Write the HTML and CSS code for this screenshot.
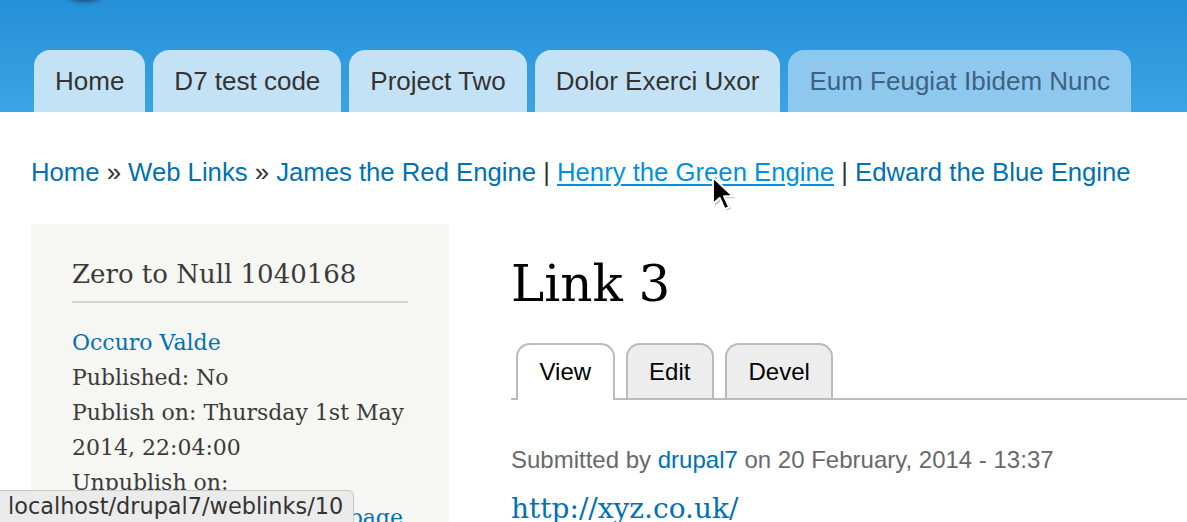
FILE: index.html
```html
<!DOCTYPE html>
<html lang="en">
<head>
  <meta charset="UTF-8">
  <title>Link 3 | drupal7</title>
  <link rel="stylesheet" href="styles.css">
</head>
<body>
<div class="header">
  <div class="logo"></div>
  <ul class="main-menu">
    <li><a href="#">Home</a></li>
    <li><a href="#">D7 test code</a></li>
    <li><a href="#">Project Two</a></li>
    <li><a href="#">Dolor Exerci Uxor</a></li>
    <li class="hover"><a href="#">Eum Feugiat Ibidem Nunc</a></li>
  </ul>
</div>

<div class="breadcrumb">
  <a href="#">Home</a> <span class="sep">»</span> <a href="#">Web Links</a> <span class="sep">»</span>
  <a href="#">James the Red Engine</a> <span class="sep">|</span>
  <a href="#" class="hovered">Henry the Green Engine</a> <span class="sep">|</span>
  <a href="#">Edward the Blue Engine</a>
</div>

<div class="main">
  <div class="sidebar">
    <h2 class="block-title">Zero to Null 1040168</h2>
    <div class="block-content">
      <a href="#">Occuro Valde</a><br>
      Published: No<br>
      Publish on: Thursday 1st May 2014, 22:04:00<br>
      Unpublish on:<br>
      <a href="#" class="nowrap">Visit the scheduled item page</a>
    </div>
  </div>
  <div class="content">
    <h1 class="title">Link 3</h1>
    <ul class="tabs">
      <li class="active"><a href="#">View</a></li>
      <li><a href="#">Edit</a></li>
      <li><a href="#">Devel</a></li>
    </ul>
    <div class="submitted">Submitted by <a href="#">drupal7</a> on 20 February, 2014 - 13:37</div>
    <div class="weblink"><a href="#">http://xyz.co.uk/</a></div>
  </div>
</div>

<div class="status-bar">localhost/drupal7/weblinks/10</div>

<svg class="cursor" width="26" height="38" viewBox="0 0 22 34">
  <path d="M3 3 L3 27 L9 21.5 L13.5 31 L17.5 29.2 L13 20 L21 20 Z" fill="#000" opacity="0.25" transform="translate(0.8 0.8)"/>
  <path d="M2 2 L2 26 L8 20.5 L12.5 30.5 L16.5 28.7 L12 19 L20 19 Z" fill="#000" stroke="#fff" stroke-width="1.8" stroke-linejoin="round"/>
</svg>
</body>
</html>
```

FILE: styles.css
```css
body { margin: 0; background: #fff; font-family: "Liberation Sans", Arial, sans-serif; color: #3b3b3b; overflow: hidden; height: 522px; }
a { color: #0071b3; text-decoration: none; }

.header { height: 112px; background: linear-gradient(#2490d7, #3ba4e3); position: relative; display: flex; align-items: flex-end; }
.logo { position: absolute; left: 66px; top: -14px; width: 38px; height: 16px; border-radius: 50%; background: #1f4f78; filter: blur(2px); }
.main-menu { list-style: none; margin: 0; padding: 0 0 0 34px; display: flex; gap: 8px; }
.main-menu li a { display: block; height: 62px; line-height: 62px; padding: 0 21px; background: #c4e2f6; color: #333; font-size: 26px; border-radius: 16px 16px 0 0; }
.main-menu li.hover a { background: #8fc8ef; color: #3d6382; }

.breadcrumb { padding: 45px 0 0 31px; font-size: 25.7px; line-height: 30px; color: #333; }
.breadcrumb .sep { color: #333; }
.breadcrumb a.hovered { color: #018fe2; text-decoration: underline; text-underline-offset: 3px; }

.main { display: flex; gap: 62px; margin-top: 37px; padding-left: 31px; }
.sidebar { width: 336px; padding: 32px 41px 40px; background: #f6f6f2; font-family: Georgia, "DejaVu Serif", serif; height: 400px; }
.block-title { margin: 0; font-weight: normal; font-size: 26px; line-height: 36px; color: #3b3b3b; padding-bottom: 9px; border-bottom: 2px solid #d6d6d6; }
.block-content { margin-top: 22px; font-size: 22px; line-height: 35px; color: #3b3b3b; }
.nowrap { white-space: nowrap; }

.content { flex: 1; }
.title { margin: 30px 0 0; font-family: Georgia, "DejaVu Serif", serif; font-weight: normal; font-size: 50px; line-height: 60px; color: #000; }
.tabs { list-style: none; margin: 29px 0 0; padding: 0 0 0 5px; display: flex; gap: 11px; border-bottom: 2px solid #bbb; height: 55px; }
.tabs li a { display: block; height: 53px; line-height: 53px; padding: 0 21.5px; background: #ededed; color: #000; font-size: 24px; border: 2px solid #bbb; border-bottom: none; border-radius: 14px 14px 0 0; }
.tabs li.active a { background: #fff; height: 55px; }

.submitted { margin-top: 46px; font-size: 24px; line-height: 28px; color: #68696b; }
.weblink { margin-top: 18px; font-family: Georgia, "DejaVu Serif", serif; font-size: 28px; }

.status-bar { position: fixed; left: 0; bottom: 0; height: 31px; line-height: 31px; padding: 0 10px 0 8px; background: #ebebeb; border: 1px solid #c8c8c8; border-left: none; border-bottom: none; border-radius: 0 6px 0 0; color: #333; font-size: 22.4px; font-family: "DejaVu Sans", sans-serif; }
.cursor { position: absolute; left: 710px; top: 175px; }
```
